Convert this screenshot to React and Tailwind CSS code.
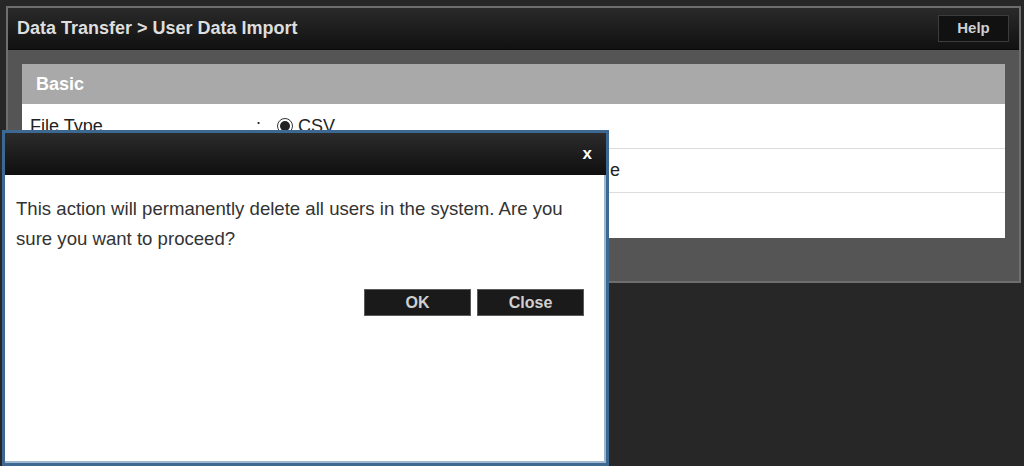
import React from "react";

export default function App() {
  return (
    <div
      className="relative w-[1024px] h-[466px] overflow-hidden bg-[#272727] pt-[6px] pl-[6px]"
      style={{ fontFamily: '"Liberation Sans", Arial, sans-serif' }}
    >
      {/* main panel */}
      <div className="w-[1015px] h-[277px] border-2 border-[#6e6e6e] bg-[#555555] flex flex-col">
        <div className="h-[42px] flex items-center justify-between pl-[9px] pr-[10px] bg-gradient-to-b from-[#2a2a2a] to-[#111111] border-b border-[#0a0a0a]">
          <span className="text-[18px] font-bold text-[#dedede]">Data Transfer &gt; User Data Import</span>
          <button className="w-[71px] h-[27px] bg-[#111111] border border-[#3c3c3c] text-[15px] font-bold text-[#cfcfcf]">
            Help
          </button>
        </div>
        <div className="px-[14px] pt-[14px]">
          <div className="bg-white">
            <div className="h-[40px] bg-[#a9a9a9] flex items-center pl-[14px] text-[18px] font-bold text-white">
              Basic
            </div>
            <div className="h-[45px] flex items-center border-b border-[#dcdcdc] text-[18px] text-[#222]">
              <span className="w-[234px] pl-[8px]">File Type</span>
              <span className="w-[21px]">:</span>
              <span className="flex items-center gap-[5px]">
                <span className="w-[16px] h-[16px] rounded-full border border-[#333] flex items-center justify-center">
                  <span className="w-[10px] h-[10px] rounded-full bg-[#222]" />
                </span>
                CSV
              </span>
            </div>
            <div className="h-[44px] flex items-center border-b border-[#dcdcdc] text-[18px] text-[#222]">
              <span className="pl-[588px]">e</span>
            </div>
            <div className="h-[45px]" />
          </div>
        </div>
      </div>

      {/* confirm dialog */}
      <div className="absolute left-[2px] top-[130px] w-[607px] h-[336px] border-[3px] border-[#3d6892] bg-white flex flex-col">
        <div className="h-[42px] bg-gradient-to-b from-[#2c2c2c] to-[#0f0f0f] flex items-center justify-end pr-[14px]">
          <span className="text-[17px] font-bold text-white">x</span>
        </div>
        <div className="flex-1 border-r-2 border-b-2 border-[#9fb6cf] flex flex-col">
          <p className="pl-[11px] pr-[30px] pt-[19px] text-[18.6px] leading-[30px] text-[#333333]">
            This action will permanently delete all users in the system. Are you sure you want to proceed?
          </p>
          <div className="flex justify-end gap-[6px] pr-[20px] mt-[35px]">
            <button className="w-[107px] h-[27px] bg-[#1a1a1a] border border-[#5a5a5a] text-[16px] font-bold text-[#d0d0d0]">
              OK
            </button>
            <button className="w-[107px] h-[27px] bg-[#1a1a1a] border border-[#5a5a5a] text-[16px] font-bold text-[#d0d0d0]">
              Close
            </button>
          </div>
        </div>
      </div>
    </div>
  );
}
